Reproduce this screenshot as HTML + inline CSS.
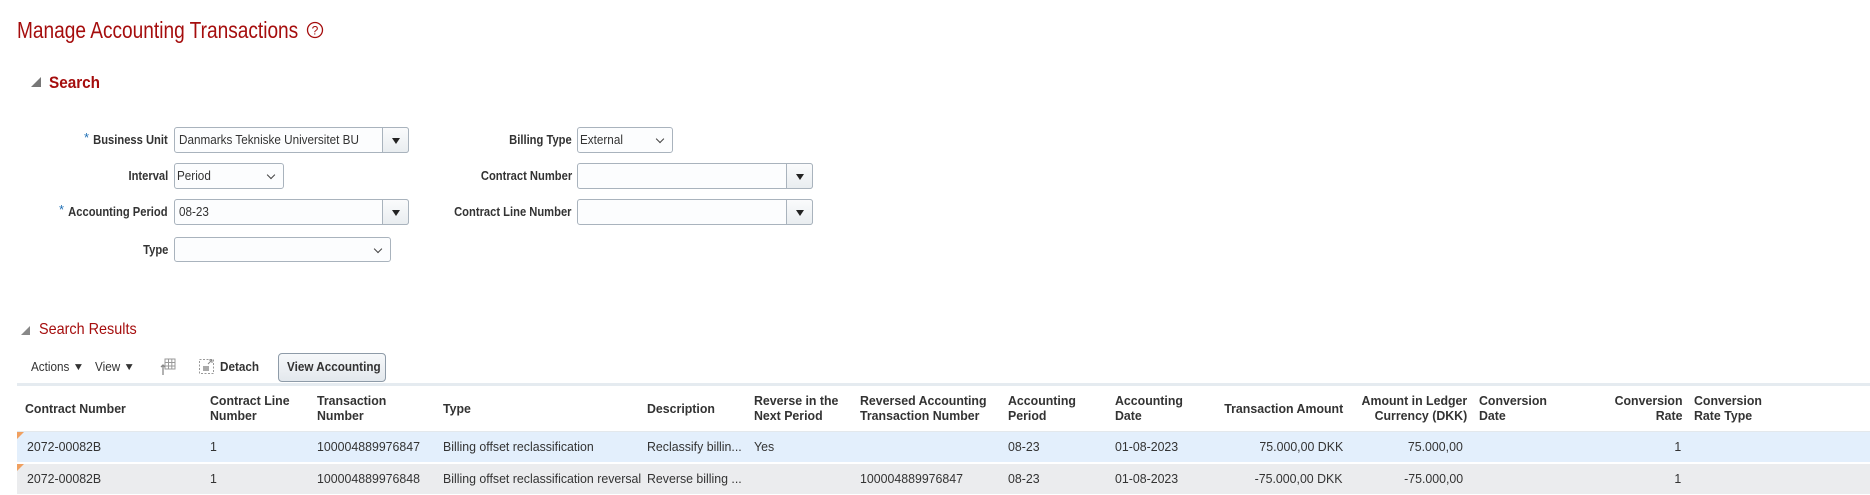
<!DOCTYPE html>
<html><head><meta charset="utf-8">
<style>
*{margin:0;padding:0;box-sizing:border-box}
body{width:1870px;height:495px;background:#fff;font-family:"Liberation Sans",Arial,sans-serif;color:#333;position:relative;overflow:hidden;font-size:13px}
.t{position:absolute;white-space:nowrap;transform:scaleX(.9);transform-origin:0 50%}
.b{font-weight:bold}
.lbl{position:absolute;white-space:nowrap;font-weight:bold;font-size:13px;transform:scaleX(.86);transform-origin:100% 50%;text-align:right;color:#333}
.inp{position:absolute;border:1px solid #a9b3bd;border-radius:3px;background:#fcfdfe;font-size:13px;line-height:24px;padding-left:4px}
.btn{position:absolute;top:-1px;right:-1px;width:27px;bottom:-1px;border:1px solid #a9b3bd;border-radius:0 3px 3px 0;background:linear-gradient(#fafbfc,#e9edf0)}
.btn:after{content:"";position:absolute;left:9px;top:10px;border-left:4px solid transparent;border-right:4px solid transparent;border-top:6px solid #222}
.chev{position:absolute;right:9px;top:8px;width:6px;height:6px;border-right:1.3px solid #444;border-bottom:1.3px solid #444;transform:rotate(45deg)}
.star{position:absolute;color:#1f6fb5;font-size:13px}
.h{position:absolute;white-space:nowrap;font-weight:bold;font-size:13px;line-height:15px;transform:scaleX(.95);transform-origin:0 0}
.hr{transform-origin:100% 0;text-align:right}
.c{position:absolute;white-space:nowrap;font-size:13px;transform:scaleX(.95);transform-origin:0 50%}
.cr{transform-origin:100% 50%}
.flag{position:absolute;width:0;height:0;border-top:7px solid #f0a060;border-right:7px solid transparent;left:17px}
.ar{font-size:13px;display:inline-block;transform:scaleY(.8)}
</style></head><body>

<div class="t" style="left:17px;top:16px;font-size:23px;color:#a50d0d;line-height:28px;transform:scaleX(.83)">Manage Accounting Transactions</div>
<svg style="position:absolute;left:306px;top:21px" width="18" height="18" viewBox="0 0 18 18"><circle cx="9" cy="9" r="7.5" fill="none" stroke="#a50d0d" stroke-width="1.3"/><text x="9" y="13.5" text-anchor="middle" font-family="Liberation Sans" font-size="12" fill="#a50d0d">?</text></svg>

<div style="position:absolute;left:31px;top:77px;width:0;height:0;border-left:10px solid transparent;border-bottom:10px solid #777"></div>
<div class="t b" style="left:49px;top:73px;font-size:17px;color:#a50d0d;line-height:20px">Search</div>

<div class="star" style="left:84px;top:130px">*</div>
<div class="lbl" style="right:1702px;top:132px">Business Unit</div>
<div class="inp" style="left:174px;top:127px;width:235px;height:26px"><span class="t" style="position:static;display:inline-block">Danmarks Tekniske Universitet BU</span><div class="btn"></div></div>

<div class="lbl" style="right:1702px;top:168px">Interval</div>
<div class="inp" style="left:174px;top:163px;width:110px;height:26px;padding-left:2px"><span class="t" style="position:static;display:inline-block">Period</span><div class="chev"></div></div>

<div class="star" style="left:59px;top:202px">*</div>
<div class="lbl" style="right:1702px;top:204px">Accounting Period</div>
<div class="inp" style="left:174px;top:199px;width:235px;height:26px"><span class="t" style="position:static;display:inline-block">08-23</span><div class="btn"></div></div>

<div class="lbl" style="right:1702px;top:242px">Type</div>
<div class="inp" style="left:174px;top:237px;width:217px;height:25px"><div class="chev"></div></div>

<div class="lbl" style="right:1298px;top:132px">Billing Type</div>
<div class="inp" style="left:577px;top:127px;width:96px;height:26px;padding-left:2px"><span class="t" style="position:static;display:inline-block">External</span><div class="chev"></div></div>

<div class="lbl" style="right:1298px;top:168px">Contract Number</div>
<div class="inp" style="left:577px;top:163px;width:236px;height:26px"><div class="btn"></div></div>

<div class="lbl" style="right:1298px;top:204px">Contract Line Number</div>
<div class="inp" style="left:577px;top:199px;width:236px;height:26px"><div class="btn"></div></div>

<div style="position:absolute;left:21px;top:326px;width:0;height:0;border-left:9px solid transparent;border-bottom:9px solid #888"></div>
<div class="t" style="left:39px;top:320px;font-size:16px;color:#a50d0d;line-height:20px">Search Results</div>

<div class="t" style="left:31px;top:359px;font-size:13px;line-height:16px">Actions <span class="ar">▼</span></div>
<div class="t" style="left:95px;top:359px;font-size:13px;line-height:16px">View <span class="ar">▼</span></div>
<svg style="position:absolute;left:160px;top:358px" width="16" height="18" viewBox="0 0 16 18"><rect x="5" y="1" width="10" height="10" fill="none" stroke="#999"/><path d="M5 4.5H15M5 8H15M8.5 1V11M11.8 1V11" stroke="#999"/><path d="M3 17V7M1 9l2-2 2 2" fill="none" stroke="#888" stroke-width="1.3"/></svg>
<svg style="position:absolute;left:199px;top:358px" width="16" height="18" viewBox="0 0 16 18"><rect x="0.5" y="1.5" width="14" height="14" fill="none" stroke="#999" stroke-dasharray="2 1.5"/><rect x="4" y="8" width="6" height="5" fill="#aaa"/><path d="M9 6l4-4M10 2h3v3" fill="none" stroke="#888"/></svg>
<div class="t b" style="left:220px;top:359px;line-height:16px">Detach</div>
<div style="position:absolute;left:278px;top:353px;width:108px;height:29px;border:1px solid #8e9ba8;border-radius:4px;background:linear-gradient(#f6f8fa,#e3e8ed)"></div>
<div class="t b" style="left:287px;top:359px;line-height:16px">View Accounting</div>

<div style="position:absolute;left:17px;top:383px;width:1853px;height:3px;background:#e5ebf0"></div>
<div style="position:absolute;left:17px;top:431px;width:1853px;height:1px;background:#e3e8ec"></div>
<div style="position:absolute;left:17px;top:432px;width:1853px;height:30px;background:#e3effc"></div>
<div style="position:absolute;left:17px;top:462px;width:1853px;height:2px;background:#fff"></div>
<div style="position:absolute;left:17px;top:464px;width:1853px;height:30px;background:#ebecee"></div>

<div class="h" style="left:25px;top:401px">Contract Number</div>
<div class="h" style="left:210px;top:393px">Contract Line<br>Number</div>
<div class="h" style="left:317px;top:393px">Transaction<br>Number</div>
<div class="h" style="left:443px;top:401px">Type</div>
<div class="h" style="left:647px;top:401px">Description</div>
<div class="h" style="left:754px;top:393px">Reverse in the<br>Next Period</div>
<div class="h" style="left:860px;top:393px">Reversed Accounting<br>Transaction Number</div>
<div class="h" style="left:1008px;top:393px">Accounting<br>Period</div>
<div class="h" style="left:1115px;top:393px">Accounting<br>Date</div>
<div class="h hr" style="right:527px;top:401px">Transaction Amount</div>
<div class="h hr" style="right:403px;top:393px">Amount in Ledger<br>Currency (DKK)</div>
<div class="h" style="left:1479px;top:393px">Conversion<br>Date</div>
<div class="h hr" style="right:187px;top:393px">Conversion<br>Rate</div>
<div class="h" style="left:1694px;top:393px">Conversion<br>Rate Type</div>

<div class="flag" style="top:432px"></div>
<div class="flag" style="top:464px"></div>

<div class="c" style="left:27px;top:439px">2072-00082B</div>
<div class="c" style="left:210px;top:439px">1</div>
<div class="c" style="left:317px;top:439px">100004889976847</div>
<div class="c" style="left:443px;top:439px">Billing offset reclassification</div>
<div class="c" style="left:647px;top:439px">Reclassify billin...</div>
<div class="c" style="left:754px;top:439px">Yes</div>
<div class="c" style="left:1008px;top:439px">08-23</div>
<div class="c" style="left:1115px;top:439px">01-08-2023</div>
<div class="c cr" style="right:527px;top:439px">75.000,00 DKK</div>
<div class="c cr" style="right:407px;top:439px">75.000,00</div>
<div class="c cr" style="right:189px;top:439px">1</div>

<div class="c" style="left:27px;top:471px">2072-00082B</div>
<div class="c" style="left:210px;top:471px">1</div>
<div class="c" style="left:317px;top:471px">100004889976848</div>
<div class="c" style="left:443px;top:471px">Billing offset reclassification reversal</div>
<div class="c" style="left:647px;top:471px">Reverse billing ...</div>
<div class="c" style="left:860px;top:471px">100004889976847</div>
<div class="c" style="left:1008px;top:471px">08-23</div>
<div class="c" style="left:1115px;top:471px">01-08-2023</div>
<div class="c cr" style="right:527px;top:471px">-75.000,00 DKK</div>
<div class="c cr" style="right:407px;top:471px">-75.000,00</div>
<div class="c cr" style="right:189px;top:471px">1</div>

</body></html>
